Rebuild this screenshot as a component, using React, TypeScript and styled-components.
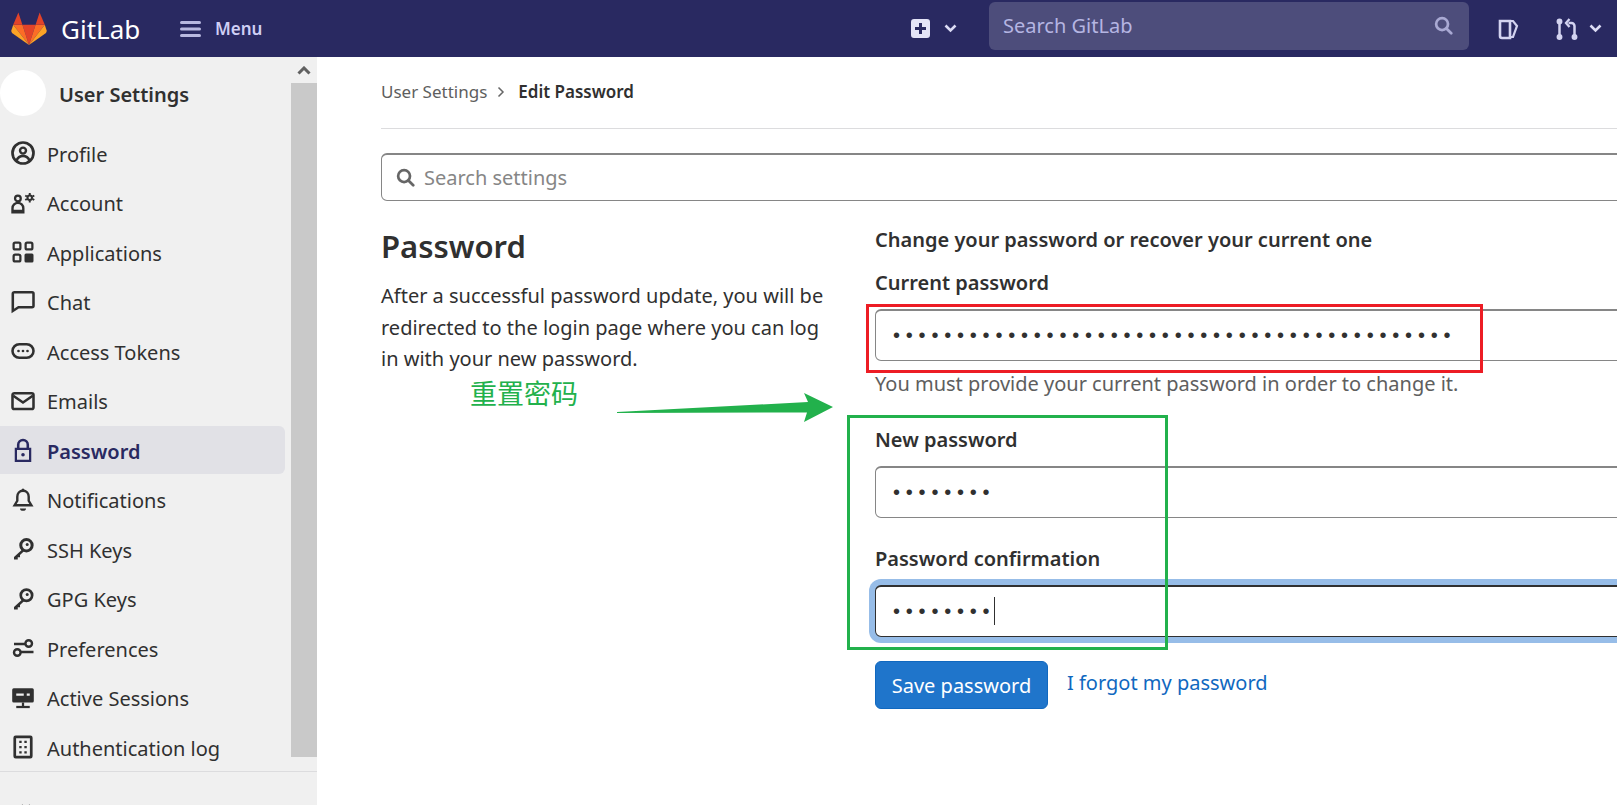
import styled, { createGlobalStyle } from 'styled-components';
import { ReactNode } from 'react';

const GlobalStyle = createGlobalStyle`
  html, body {
    margin: 0;
    padding: 0;
    height: 100%;
    overflow: hidden;
    background: #fff;
  }
  body {
    font-family: "Noto Sans", "Open Sans", Arial, sans-serif;
    font-size: 20px;
    color: #303030;
  }
  * {
    box-sizing: border-box;
  }
`;

const Icon = ({ children, size = 24 }: { children: ReactNode; size?: number }) => (
  <svg width={size} height={size} viewBox="0 0 16 16" fill="none" stroke="currentColor" strokeWidth="1.5">
    {children}
  </svg>
);

const navItems: { label: string; active?: boolean; icon: ReactNode }[] = [
  {
    label: 'Profile',
    icon: (
      <>
        <circle cx="8" cy="8" r="7" strokeWidth="1.8" />
        <circle cx="8" cy="6.4" r="2" strokeWidth="1.6" />
        <path d="M3.7 13c.8-2 2.4-3 4.3-3s3.500 1 4.300 3" strokeWidth="1.8" />
      </>
    ),
  },
  {
    label: 'Account',
    icon: (
      <>
        <circle cx="4.600" cy="5" r="1.900" />
        <path d="M1 14.200v-2.700a3.600 3.600 0 0 1 7.200 0v2.700z" strokeWidth="1.600" />
        <path d="M1 12.500h7.200v2H1z" fill="currentColor" stroke="none" />
        <circle cx="12.500" cy="4.500" r="1.500" strokeWidth="1.400" />
        <path d="M12.500 1.300v1.300M12.500 6.400v1.300M9.500 3l1.100.7M14.400 5.300l1.100.7M9.500 6l1.100-.7M14.400 3.700l1.100-.7" strokeWidth="1.300" />
      </>
    ),
  },
  {
    label: 'Applications',
    icon: (
      <>
        <rect x="1.750" y="1.750" width="4.500" height="4.500" rx="1" />
        <rect x="9.750" y="1.750" width="4.500" height="4.500" rx="1" />
        <rect x="1.750" y="9.750" width="4.500" height="4.500" rx="1" />
        <rect x="9" y="9" width="6" height="6" rx="1" fill="currentColor" stroke="none" />
      </>
    ),
  },
  {
    label: 'Chat',
    icon: <path d="M2.500 1.500h11.500a1 1 0 0 1 1 1v8a1 1 0 0 1-1 1H5l-3.800 2.500V2.500a1 1 0 0 1 1.300-1z" strokeWidth="1.700" />,
  },
  {
    label: 'Access Tokens',
    icon: (
      <>
        <rect x="1" y="3.500" width="14" height="9" rx="4.500" strokeWidth="1.700" />
        <circle cx="5" cy="8" r=".9" fill="currentColor" stroke="none" />
        <circle cx="8" cy="8" r=".9" fill="currentColor" stroke="none" />
        <circle cx="11" cy="8" r=".9" fill="currentColor" stroke="none" />
      </>
    ),
  },
  {
    label: 'Emails',
    icon: (
      <>
        <rect x="1" y="2.800" width="14" height="10.500" rx="1.200" strokeWidth="1.700" />
        <path d="M1.500 4.500 8 9l6.500-4.500" strokeWidth="1.700" />
      </>
    ),
  },
  {
    label: 'Password',
    active: true,
    icon: (
      <>
        <path d="M4.800 7V4.500a3.200 3.200 0 0 1 6.400 0V7" strokeWidth="1.700" />
        <path
          fillRule="evenodd"
          clipRule="evenodd"
          d="M2.500 6.500h11V16h-11zM4 8v6.500h8V8zM8 10a1.200 1.200 0 1 1 0 2.400A1.200 1.200 0 0 1 8 10z"
          fill="currentColor"
          stroke="none"
        />
      </>
    ),
  },
  {
    label: 'Notifications',
    icon: (
      <>
        <path d="M8 1.800c2.400 0 3.800 1.800 3.800 4v2.700l1.800 3H2.400l1.800-3V5.800c0-2.200 1.400-4 3.800-4z" strokeWidth="1.600" />
        <path d="M6 13.600h4a2 1.600 0 0 1-4 0z" fill="currentColor" stroke="none" />
        <circle cx="8" cy="1.300" r="1" fill="currentColor" stroke="none" />
      </>
    ),
  },
  {
    label: 'SSH Keys',
    icon: (
      <>
        <circle cx="10.300" cy="5.500" r="3.800" strokeWidth="2" />
        <circle cx="10.800" cy="5" r="1" fill="currentColor" stroke="none" />
        <path d="M7.500 8.300 2 13.400V15h2.500v-1.500H6V12l2.800-2.700" fill="currentColor" stroke="none" />
      </>
    ),
  },
  {
    label: 'GPG Keys',
    icon: (
      <>
        <circle cx="10.300" cy="5.500" r="3.800" strokeWidth="1.800" />
        <circle cx="10.800" cy="5" r="1" fill="currentColor" stroke="none" />
        <path d="M7.500 8.300 2 13.400V15h2.500v-1.500H6V12l2.800-2.700" fill="currentColor" stroke="none" />
      </>
    ),
  },
  {
    label: 'Preferences',
    icon: (
      <>
        <path d="M2 5.300h7.500M6.500 10.700H15" strokeWidth="1.600" />
        <circle cx="11.800" cy="5" r="2.200" strokeWidth="1.600" />
        <circle cx="4.200" cy="11" r="2.200" strokeWidth="1.600" />
      </>
    ),
  },
  {
    label: 'Active Sessions',
    icon: (
      <>
        <path
          fillRule="evenodd"
          clipRule="evenodd"
          d="M1.800 1.500h12.400a1 1 0 0 1 1 1v7.500a1 1 0 0 1-1 1H1.800a1 1 0 0 1-1-1V2.500a1 1 0 0 1 1-1zM3.500 5v1.500h5V5zM10.500 5v1.500h2V5z"
          fill="currentColor"
          stroke="none"
        />
        <path d="M8 11v2.500" />
        <path d="M3.500 14h9" strokeWidth="1.500" />
      </>
    ),
  },
  {
    label: 'Authentication log',
    icon: (
      <>
        <rect x="2.500" y="1.300" width="11" height="13.500" rx=".6" strokeWidth="1.800" />
        <path d="M5.500 4.500h1.600M8.900 4.500h1.600M5.500 8h1.600M8.900 8h1.600M5.500 11.500h1.600M8.900 11.500h1.600" strokeWidth="1.500" />
      </>
    ),
  },
];

export default function App() {
  return (
    <Page>
      <GlobalStyle />
      <TopBar>
        <Brand>
          <svg width="36" height="33" viewBox="0 0 36 33">
            <polygon points="18,33 24.600,12.700 11.400,12.700" fill="#e24329" />
            <polygon points="18,33 11.400,12.700 2.200,12.700" fill="#fc6d26" />
            <polygon points="2.200,12.700 0.200,18.900 1,21 18,33" fill="#fca326" />
            <polygon points="2.200,12.700 11.400,12.700 7.400,0.500" fill="#e24329" />
            <polygon points="18,33 24.600,12.700 33.800,12.700" fill="#fc6d26" />
            <polygon points="33.800,12.700 35.800,18.900 35,21 18,33" fill="#fca326" />
            <polygon points="33.800,12.700 24.600,12.700 28.600,0.500" fill="#e24329" />
          </svg>
          <BrandName>GitLab</BrandName>
        </Brand>
        <MenuButton>
          <svg width="22" height="16" viewBox="0 0 22 16" fill="currentColor">
            <rect x="0" y="0" width="21" height="3" rx="1.500" />
            <rect x="0" y="6.500" width="21" height="3" rx="1.500" />
            <rect x="0" y="13" width="21" height="3" rx="1.500" />
          </svg>
          <MenuLabel>Menu</MenuLabel>
        </MenuButton>
        <TopActions>
          <NewButton>
            <svg width="19" height="19" viewBox="0 0 19 19">
              <path
                fillRule="evenodd"
                d="M3 0h13a3 3 0 0 1 3 3v13a3 3 0 0 1-3 3H3a3 3 0 0 1-3-3V3a3 3 0 0 1 3-3zM8 4v4H4v3h4v4h3v-4h4V8h-4V4z"
                fill="#e4e4f7"
              />
            </svg>
            <Chevron />
          </NewButton>
          <SearchBox>
            <SearchPlaceholder>Search GitLab</SearchPlaceholder>
            <svg width="19" height="19" viewBox="0 0 16 16" fill="none" stroke="#a9a9d3" strokeWidth="2.300">
              <circle cx="6.800" cy="6.800" r="5" />
              <path d="m10.500 10.500 4 4" strokeLinecap="round" />
            </svg>
          </SearchBox>
          <TodoIcon>
            <svg width="22" height="22" viewBox="0 0 22 22" fill="none" stroke="#d3d3f0" strokeWidth="2.600">
              <path d="M3 3h10v17H5a2 2 0 0 1-2-2z" />
              <path d="M13 3h3l4 5-4 11h-3" strokeWidth="2.200" />
            </svg>
          </TodoIcon>
          <MergeButton>
            <svg width="22" height="22" viewBox="0 0 22 22" fill="none" stroke="#d3d3f0" strokeWidth="2.500">
              <circle cx="3.500" cy="3.500" r="1.700" fill="#d3d3f0" />
              <circle cx="3.500" cy="19" r="1.700" fill="#d3d3f0" />
              <circle cx="18.500" cy="19" r="1.700" fill="#d3d3f0" />
              <path d="M3.500 5v12M18.500 17V8a3 3 0 0 0-3-3h-3" />
              <path d="M13.500 1 10 5l3.500 4" strokeWidth="2.300" />
            </svg>
            <Chevron />
          </MergeButton>
        </TopActions>
      </TopBar>

      <Body>
        <Sidebar>
          <SidebarScroll>
            <SidebarNav>
              <ContextHeader>
                <Avatar />
                <ContextTitle>User Settings</ContextTitle>
              </ContextHeader>
              <NavList>
                {navItems.map((item) => (
                  <NavRow key={item.label} $active={item.active}>
                    <Icon>{item.icon}</Icon>
                    <span>{item.label}</span>
                  </NavRow>
                ))}
              </NavList>
            </SidebarNav>
            <ScrollTrack>
              <ScrollArrow>
                <svg width="14" height="9" viewBox="0 0 14 9" fill="none" stroke="#606060" strokeWidth="3">
                  <path d="m1.500 7.500 5.500-5.500 5.500 5.500" />
                </svg>
              </ScrollArrow>
              <ScrollThumb />
            </ScrollTrack>
          </SidebarScroll>
          <SidebarFooter>
            <svg width="16" height="12" viewBox="0 0 16 12" fill="none" stroke="#303030" strokeWidth="2">
              <path d="M7 1 2 8M14 1 9 8" />
            </svg>
          </SidebarFooter>
        </Sidebar>

        <Main>
          <Breadcrumbs>
            <Crumb>User Settings</Crumb>
            <svg width="10" height="12" viewBox="0 0 10 12" fill="none" stroke="#666" strokeWidth="1.500">
              <path d="m2.500 1.500 4.500 4.500-4.500 4.500" />
            </svg>
            <CrumbCurrent>Edit Password</CrumbCurrent>
          </Breadcrumbs>

          <SettingsSearch>
            <svg width="19" height="19" viewBox="0 0 16 16" fill="none" stroke="#666" strokeWidth="2.300">
              <circle cx="6.800" cy="6.800" r="5" />
              <path d="m10.500 10.500 4 4" strokeLinecap="round" />
            </svg>
            <SettingsPlaceholder>Search settings</SettingsPlaceholder>
          </SettingsSearch>

          <Columns>
            <Intro>
              <Heading>Password</Heading>
              <IntroText>
                After a successful password update, you will be redirected to the login page where you can log in with
                your new password.
              </IntroText>
            </Intro>
            <Form>
              <FormTitle>Change your password or recover your current one</FormTitle>
              <FieldGroup $top={13}>
                <FieldLabel>Current password</FieldLabel>
                <PasswordInput type="password" readOnly value={'x'.repeat(44)} />
                <HelpText>You must provide your current password in order to change it.</HelpText>
              </FieldGroup>
              <FieldGroup $top={26}>
                <FieldLabel>New password</FieldLabel>
                <PasswordInput type="password" readOnly value={'x'.repeat(8)} />
              </FieldGroup>
              <FieldGroup $top={26}>
                <FieldLabel>Password confirmation</FieldLabel>
                <FocusWrap>
                  <PasswordInput $focused type="password" readOnly value={'x'.repeat(8)} />
                  <Caret />
                </FocusWrap>
              </FieldGroup>
              <Actions>
                <SaveButton>Save password</SaveButton>
                <ForgotLink>I forgot my password</ForgotLink>
              </Actions>
            </Form>
          </Columns>
        </Main>
      </Body>

      <RedMark />
      <GreenMark />
      <MarkNote>重置密码</MarkNote>
      <MarkArrow width="220" height="34" viewBox="0 0 220 34">
        <polygon points="0,21 191,11 187,2 216,16 187,31 190,21.500 0,22" fill="#22b14c" />
      </MarkArrow>
    </Page>
  );
}

const Page = styled.div`
  position: relative;
  width: 1617px;
  height: 805px;
  overflow: hidden;
  display: flex;
  flex-direction: column;
`;

const TopBar = styled.header`
  height: 57px;
  flex: none;
  background: #292961;
  display: flex;
  align-items: center;
  padding-left: 11px;
`;

const Brand = styled.div`
  display: flex;
  align-items: center;
  gap: 14px;
  width: 169px;
`;

const BrandName = styled.span`
  color: #fff;
  font-size: 26px;
  line-height: 1;
`;

const MenuButton = styled.div`
  display: flex;
  align-items: center;
  gap: 13px;
  color: #b9b9e0;
`;

const MenuLabel = styled.span`
  color: #cfcff5;
  font-size: 17px;
  font-weight: 600;
`;

const TopActions = styled.div`
  margin-left: auto;
  display: flex;
  align-items: center;
  height: 100%;
`;

const NewButton = styled.div`
  display: flex;
  align-items: center;
  gap: 14px;
  margin-right: 32px;
`;

const Chevron = () => (
  <svg width="13" height="9" viewBox="0 0 13 9" fill="none" stroke="#dcdcf5" strokeWidth="2.600">
    <path d="m1.500 1.500 5 5 5-5" />
  </svg>
);

const SearchBox = styled.div`
  width: 480px;
  height: 48px;
  margin-top: -6px;
  border-radius: 6px;
  background: #4d4d7b;
  display: flex;
  align-items: center;
  justify-content: space-between;
  padding: 0 16px 0 14px;
`;

const SearchPlaceholder = styled.span`
  color: #b5b5e2;
  font-size: 20px;
`;

const TodoIcon = styled.div`
  display: flex;
  margin-left: 28px;
`;

const MergeButton = styled.div`
  display: flex;
  align-items: center;
  gap: 11px;
  margin-left: 37px;
  margin-right: 15px;
`;

const Body = styled.div`
  flex: 1;
  display: flex;
  min-height: 0;
`;

const Sidebar = styled.aside`
  width: 317px;
  flex: none;
  background: #f0f0f0;
  display: flex;
  flex-direction: column;
`;

const SidebarScroll = styled.div`
  height: 719px;
  display: flex;
`;

const SidebarNav = styled.nav`
  width: 291px;
  padding-top: 13px;
`;

const ContextHeader = styled.div`
  height: 46px;
  display: flex;
  align-items: center;
  gap: 13px;
  margin-bottom: 13px;
`;

const Avatar = styled.div`
  width: 46px;
  height: 46px;
  border-radius: 50%;
  background: #fff;
`;

const ContextTitle = styled.div`
  font-weight: 600;
  font-size: 20px;
  height: 24px;
  line-height: 24px;
  margin-top: 4px;
  overflow: hidden;
`;

const NavList = styled.div`
  display: flex;
  flex-direction: column;
  gap: 1.5px;
`;

const NavRow = styled.div<{ $active?: boolean }>`
  height: 48px;
  width: 285px;
  display: flex;
  align-items: center;
  gap: 12px;
  padding-left: 11px;
  border-radius: 0 6px 6px 0;
  background: ${(props) => (props.$active ? '#e1e1e6' : 'transparent')};
  color: ${(props) => (props.$active ? '#292961' : '#303030')};
  font-weight: ${(props) => (props.$active ? 600 : 400)};
  & > span {
    position: relative;
    top: 1px;
  }
`;

const ScrollTrack = styled.div`
  width: 26px;
  height: 700px;
  display: flex;
  flex-direction: column;
`;

const ScrollArrow = styled.div`
  height: 26px;
  display: flex;
  align-items: center;
  justify-content: center;
`;

const ScrollThumb = styled.div`
  flex: 1;
  background: #c9c9c9;
`;

const SidebarFooter = styled.div`
  border-top: 1px solid #dcdcde;
  flex: 1;
  padding: 23px 0 0 16px;
`;

const Main = styled.main`
  flex: none;
  width: 1400px;
  padding-left: 64px;
`;

const Breadcrumbs = styled.div`
  height: 72px;
  display: flex;
  align-items: center;
  gap: 9px;
  border-bottom: 1px solid #dcdcde;
  padding-bottom: 2px;
  font-size: 17px;
`;

const Crumb = styled.span`
  color: #5e5e5e;
`;

const CrumbCurrent = styled.span`
  font-weight: 600;
  margin-left: 3px;
`;

const SettingsSearch = styled.div`
  height: 48px;
  margin-top: 24px;
  border: 1px solid #868686;
  border-top-width: 2px;
  border-radius: 6px;
  display: flex;
  align-items: center;
  gap: 9px;
  padding-left: 14px;
`;

const SettingsPlaceholder = styled.span`
  color: #868686;
`;

const Columns = styled.div`
  display: grid;
  grid-template-columns: 494px 1fr;
  margin-top: 24px;
`;

const Intro = styled.section``;

const Heading = styled.h2`
  margin: 0;
  font-size: 31px;
  font-weight: 600;
  line-height: 42px;
`;

const IntroText = styled.p`
  margin: 13px 0 0;
  width: 450px;
  line-height: 31.500px;
`;

const Form = styled.form`
  display: flex;
  flex-direction: column;
`;

const FormTitle = styled.div`
  font-weight: 600;
  line-height: 30px;
`;

const FieldGroup = styled.div<{ $top: number }>`
  margin-top: ${(props) => props.$top}px;
`;

const FieldLabel = styled.label`
  display: block;
  font-weight: 600;
  line-height: 30px;
  margin-bottom: 11px;
`;

const PasswordInput = styled.input<{ $focused?: boolean }>`
  display: block;
  width: 100%;
  height: 52px;
  padding: 0 17px;
  outline: none;
  border-radius: 6px;
  border: 1px solid ${(props) => (props.$focused ? '#303030' : '#868686')};
  border-top-width: 2px;
  color: #303030;
  font-family: "Liberation Sans", Arial, sans-serif;
  font-size: 20px;
  letter-spacing: 5.800px;
  box-shadow: ${(props) => (props.$focused ? '0 0 0 6px #97bde8' : 'none')};
`;

const FocusWrap = styled.div`
  position: relative;
`;

const Caret = styled.span`
  position: absolute;
  left: 119px;
  top: 12px;
  width: 1px;
  height: 28px;
  background: #303030;
`;

const HelpText = styled.div`
  margin-top: 8px;
  line-height: 30px;
  color: #5e5e5e;
`;

const Actions = styled.div`
  display: flex;
  align-items: flex-start;
  gap: 19px;
  margin-top: 24px;
`;

const SaveButton = styled.button`
  width: 173px;
  height: 48px;
  padding: 0;
  border: 1px solid #1068bf;
  border-radius: 6px;
  background: #1f75cb;
  color: #fff;
  font: inherit;
`;

const ForgotLink = styled.a`
  color: #1068bf;
  line-height: 44px;
`;

const RedMark = styled.div`
  position: absolute;
  left: 866px;
  top: 304px;
  width: 617px;
  height: 69px;
  border: 3px solid #ed1c24;
`;

const GreenMark = styled.div`
  position: absolute;
  left: 847px;
  top: 415px;
  width: 321px;
  height: 235px;
  border: 3px solid #22b14c;
`;

const MarkNote = styled.div`
  position: absolute;
  left: 470px;
  top: 374px;
  color: #22b14c;
  font-family: "Noto Sans CJK SC", sans-serif;
  font-size: 27px;
  line-height: 38px;
`;

const MarkArrow = styled.svg`
  position: absolute;
  left: 617px;
  top: 391px;
`;
